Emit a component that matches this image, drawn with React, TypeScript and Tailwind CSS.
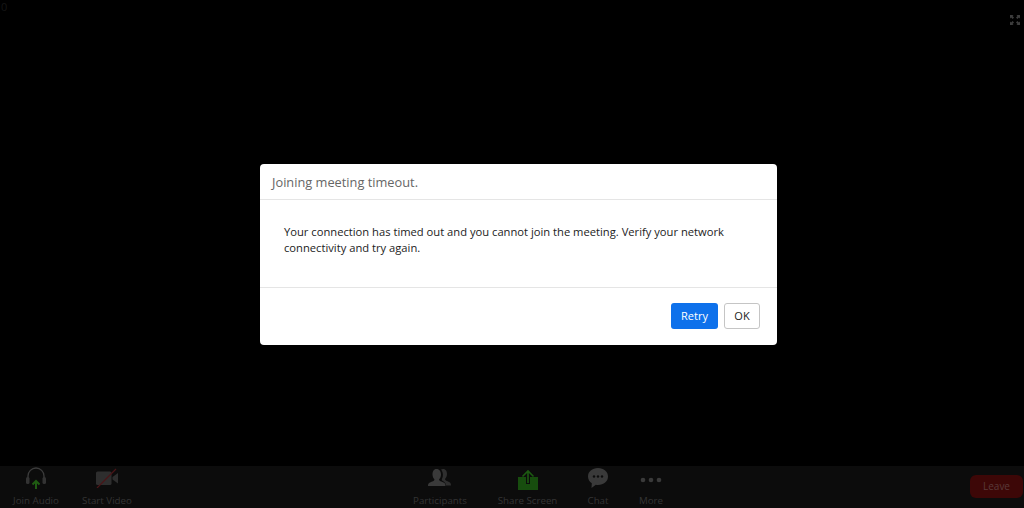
import React from "react";

const label = "text-[9.75px] leading-[12px] text-[#343434] whitespace-nowrap mt-[5px]";

function Tool({ icon, text, className = "" }: { icon: React.ReactNode; text: string; className?: string }) {
  return (
    <div className={`flex flex-col items-center ${className}`}>
      <div className="h-[24px] flex items-center justify-center">{icon}</div>
      <span className={label}>{text}</span>
    </div>
  );
}

export default function App() {
  return (
    <div className="relative w-[1024px] h-[508px] overflow-hidden bg-black flex flex-col font-['Open_Sans',sans-serif]">
      <div className="flex-1 relative flex justify-between items-start">
        <span className="text-[11px] leading-[12px] text-[#161616] pl-[1px] pt-[1px]">0</span>
        <svg className="mt-[15px] mr-[4px]" width="10" height="10" viewBox="0 0 10 10" fill="#3d3d3d">
          <path d="M0 0h3.600L2.500 1.100 4 2.600 2.600 4 1.100 2.500 0 3.600zM10 0v3.600L8.900 2.500 7.400 4 6 2.600l1.500-1.500L6.400 0zM0 10V6.400l1.100 1.100L2.600 6 4 7.400 2.500 8.900 3.600 10zM10 10H6.400l1.100-1.100L6 7.400 7.400 6l1.500 1.500L10 6.400z" />
        </svg>
      </div>

      <footer className="h-[42px] bg-[#0c0c0c] flex items-start relative">
        <Tool
          className="w-[46px] ml-[13px]"
          text="Join Audio"
          icon={
            <svg width="22" height="24" viewBox="0 0 22 24" fill="none">
              <path d="M3 14V10a8 8 0 0 1 16 0v4" stroke="#3c3c3c" strokeWidth="1.300" />
              <rect x="1" y="11" width="3.500" height="7" rx="1.500" fill="#333" />
              <rect x="17.500" y="11" width="3.500" height="7" rx="1.500" fill="#333" />
              <path d="M11 23v-8M7.500 18.500 11 15l3.500 3.500" stroke="#1f5c12" strokeWidth="2" />
            </svg>
          }
        />
        <Tool
          className="w-[50px] ml-[23px]"
          text="Start Video"
          icon={
            <svg width="24" height="20" viewBox="0 0 24 20" fill="none">
              <rect x="1" y="3.500" width="15.500" height="13.500" rx="1.500" fill="#2e2e2e" />
              <path d="M17.500 9l5.500-4v10.500L17.500 11.500z" fill="#2e2e2e" />
              <path d="M2 20 21 1" stroke="#4a1518" strokeWidth="1.200" />
            </svg>
          }
        />
        <Tool
          className="w-[54px] ml-[281px]"
          text="Participants"
          icon={
            <svg width="24" height="20" viewBox="0 0 24 20" fill="#3a3a3a">
              <path d="M15 1c3 0 4 2.500 4 5 0 2-1 4-2 5 0 1.500 2 2 4 3 1.500.7 2 1.500 2 3.500h-5c0-2.500-1.500-3.500-4-5-.6-2 .4-2 .8-4 .5-3-.5-5.500-1.800-7 .6-.3 1.200-.5 2-.5z" fill="#2f2f2f" />
              <path d="M8.500 1c3 0 4.500 2.500 4.500 5.500 0 2-1 4-2 5 0 1.500 2.500 2 4.500 3 1.500.7 2 1.500 2 3.500H0c0-2 .5-2.800 2-3.500 2-1 4.500-1.500 4.500-3-1-1-2-3-2-5C4.500 3.500 5.500 1 8.500 1z" />
            </svg>
          }
        />
        <Tool
          className="w-[59px] ml-[31px]"
          text="Share Screen"
          icon={
            <svg width="22" height="24" viewBox="0 0 22 24">
              <rect x="1" y="11" width="20" height="13" fill="#174d0e" />
              <path d="M11 18V7" stroke="#0c0c0c" strokeWidth="4" />
              <path d="M11 17V6M5.500 10.500 11 5l5.500 5.500" stroke="#1c5a11" strokeWidth="1.600" fill="none" />
            </svg>
          }
        />
        <Tool
          className="w-[24px] ml-[29px]"
          text="Chat"
          icon={
            <svg width="22" height="22" viewBox="0 0 22 22">
              <path d="M11 1c5.800 0 10 3.600 10 8.500S16.800 18 11 18c-.8 0-1.500 0-2.200-.2L4.500 21l.3-4.700C2.500 14.800 1 12.500 1 9.500 1 4.600 5.200 1 11 1z" fill="#3a3a3a" />
              <circle cx="7" cy="9.500" r="1.200" fill="#0c0c0c" />
              <circle cx="11" cy="9.500" r="1.200" fill="#0c0c0c" />
              <circle cx="15" cy="9.500" r="1.200" fill="#0c0c0c" />
            </svg>
          }
        />
        <Tool
          className="w-[24px] ml-[29px]"
          text="More"
          icon={
            <svg className="mt-[4px]" width="22" height="6" viewBox="0 0 22 6" fill="#3a3a3a">
              <circle cx="3" cy="3" r="2.300" />
              <circle cx="11" cy="3" r="2.300" />
              <circle cx="19" cy="3" r="2.300" />
            </svg>
          }
        />
        <button className="absolute right-[1px] top-[9px] w-[53px] h-[23px] rounded-[6px] bg-[#3d0707] text-[#5a3a3a] text-[10px] leading-[23px] text-center">
          Leave
        </button>
      </footer>

      <div className="absolute inset-0 flex items-center justify-center pl-[13px]">
        <div className="w-[517px] h-[181px] bg-white rounded-[4px] flex flex-col">
          <div className="h-[36px] border-b border-[#e5e5e5] pl-[12px] flex items-center">
            <h1 className="text-[12.8px] text-[#666666] mt-[3px]">Joining meeting timeout.</h1>
          </div>
          <div className="h-[88px] border-b border-[#e5e5e5] px-[24px] pt-[24px]">
            <p className="text-[11.2px] leading-[16px] text-[#222222]">
              Your connection has timed out and you cannot join the meeting. Verify your network connectivity and try again.
            </p>
          </div>
          <div className="flex-1 flex justify-end items-center gap-[6px] pr-[17px]">
            <button className="w-[47px] h-[26px] rounded-[3px] bg-[#0e71eb] text-white text-[11px]">Retry</button>
            <button className="w-[36px] h-[26px] rounded-[3px] bg-white border border-[#c5c5c5] text-[#222222] text-[11px]">OK</button>
          </div>
        </div>
      </div>
    </div>
  );
}
